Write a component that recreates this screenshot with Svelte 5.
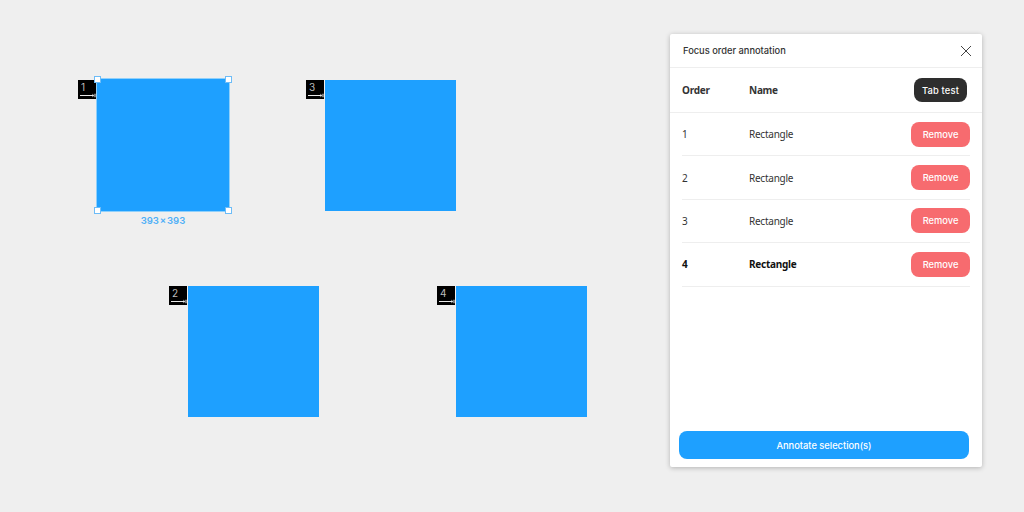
<script>
    const squares = [
        { n: 1, x: 97, y: 79, w: 132, h: 132 },
        { n: 3, x: 325, y: 80, w: 131, h: 131 },
        { n: 2, x: 188, y: 286, w: 131, h: 131 },
        { n: 4, x: 456, y: 286, w: 131, h: 131 }
    ];

    const rows = [
        { order: 1, name: 'Rectangle' },
        { order: 2, name: 'Rectangle' },
        { order: 3, name: 'Rectangle' },
        { order: 4, name: 'Rectangle', active: true }
    ];
</script>

<div class="page">
    <div class="canvas">
        {#each squares as s}
            <div class="square" class:selected={s.n === 1} style="left:{s.x}px;top:{s.y}px;width:{s.w}px;height:{s.h}px">
                <div class="tag">
                    <span class="tag-num">{s.n}</span>
                    <svg class="tag-arrow" width="16" height="5" viewBox="0 0 16 5">
                        <path d="M0 2.5H14" fill="none" stroke="#e8e8e8" stroke-width="1" />
                        <path d="M12 1L14 2.5L12 4" fill="none" stroke="#bbb" stroke-width="0.7" />
                        <path d="M15 0.8V4.2" fill="none" stroke="#ccc" stroke-width="1.2" />
                    </svg>
                </div>
                {#if s.n === 1}
                    <i class="handle tl"></i>
                    <i class="handle tr"></i>
                    <i class="handle bl"></i>
                    <i class="handle br"></i>
                    <span class="size">393 × 393</span>
                {/if}
            </div>
        {/each}
    </div>

    <div class="panel">
        <div class="title-bar">
            <span class="title">Focus order annotation</span>
            <svg class="close" width="12" height="12" viewBox="0 0 12 12">
                <path d="M1 1L11 11M11 1L1 11" fill="none" stroke="#444" stroke-width="1" />
            </svg>
        </div>
        <div class="table-head">
            <span class="col-order">Order</span>
            <span class="col-name">Name</span>
            <button class="tab-test">Tab test</button>
        </div>
        <div class="rows">
            {#each rows as row}
                <div class="row" class:active={row.active}>
                    <span class="col-order">{row.order}</span>
                    <span class="col-name">{row.name}</span>
                    <button class="remove">Remove</button>
                </div>
            {/each}
        </div>
        <div class="footer">
            <button class="annotate">Annotate selection(s)</button>
        </div>
    </div>
</div>

<style>
    :global(body) {
        margin: 0;
        background: #efefef;
    }

    .page {
        width: 1024px;
        height: 512px;
        display: flex;
        justify-content: flex-end;
        align-items: flex-start;
        padding: 34px 42px 0 0;
        box-sizing: border-box;
        overflow: hidden;
        position: relative;
        font-family: "Noto Sans", sans-serif;
    }

    .canvas {
        position: absolute;
        inset: 0;
    }

    .square {
        position: absolute;
        background: #1ea0ff;
    }

    .square.selected {
        box-shadow: 0 0 0 1px #8fd0fb;
    }

    .tag {
        position: absolute;
        left: -19px;
        top: 0;
        width: 18px;
        height: 19px;
        background: #000;
        color: #bbb;
        font-family: Inter, sans-serif;
        font-size: 10px;
        line-height: 10px;
    }

    .square.selected .tag {
        top: 1px;
    }

    .tag-num {
        position: absolute;
        left: 3px;
        top: 2px;
    }

    .tag-arrow {
        position: absolute;
        left: 2px;
        top: 13px;
    }

    .handle {
        position: absolute;
        width: 5px;
        height: 5px;
        background: #fff;
        border: 1px solid #6dbcf7;
    }

    .tl { left: -3px; top: -3px; }
    .tr { right: -3px; top: -3px; }
    .bl { left: -3px; bottom: -3px; }
    .br { right: -3px; bottom: -3px; }

    .size {
        position: absolute;
        left: 0;
        right: 0;
        top: 136px;
        text-align: center;
        color: #4fb0f7;
        font-family: Inter, sans-serif;
        font-size: 9.5px;
        font-weight: 600;
        line-height: 12px;
        word-spacing: -1.5px;
    }

    .panel {
        position: relative;
        width: 312px;
        height: 433px;
        background: #fff;
        border-radius: 2px;
        box-shadow: 0 1px 5px rgba(0, 0, 0, 0.25);
        display: flex;
        flex-direction: column;
    }

    .title-bar {
        height: 33px;
        flex: none;
        display: flex;
        align-items: center;
        justify-content: space-between;
        padding: 0 10px 0 13px;
        border-bottom: 1px solid #eee;
    }

    .title {
        font-family: Inter, sans-serif;
        font-size: 9.3px;
        font-weight: 500;
        color: #333;
    }

    .table-head {
        height: 44px;
        flex: none;
        display: flex;
        align-items: center;
        padding: 0 15px 0 12px;
        border-bottom: 1px solid #eee;
        font-size: 10px;
        font-weight: 700;
        letter-spacing: -0.25px;
        color: #333;
    }

    .col-order {
        width: 67px;
        flex: none;
    }

    .col-name {
        flex: 1;
    }

    button {
        border: none;
        color: #fff;
        font-family: Inter, sans-serif;
        font-size: 9.3px;
        font-weight: 500;
        letter-spacing: normal;
        padding: 0;
    }

    .tab-test {
        width: 53px;
        height: 24px;
        background: #2e2e2e;
        border-radius: 8px;
        letter-spacing: 0.2px;
    }

    .rows {
        flex: 1;
        padding: 0 12px;
    }

    .row {
        height: 42.4px;
        display: flex;
        align-items: center;
        border-bottom: 1px solid #eee;
        font-size: 10px;
        letter-spacing: -0.25px;
        color: #333;
    }

    .row.active {
        font-weight: 700;
        color: #111;
    }

    .remove {
        width: 59px;
        height: 25px;
        background: #f76b6f;
        border-radius: 8px;
    }

    .footer {
        padding: 0 13px 8px 9px;
    }

    .annotate {
        width: 100%;
        height: 28px;
        background: #1ea0ff;
        border-radius: 8px;
    }
</style>
